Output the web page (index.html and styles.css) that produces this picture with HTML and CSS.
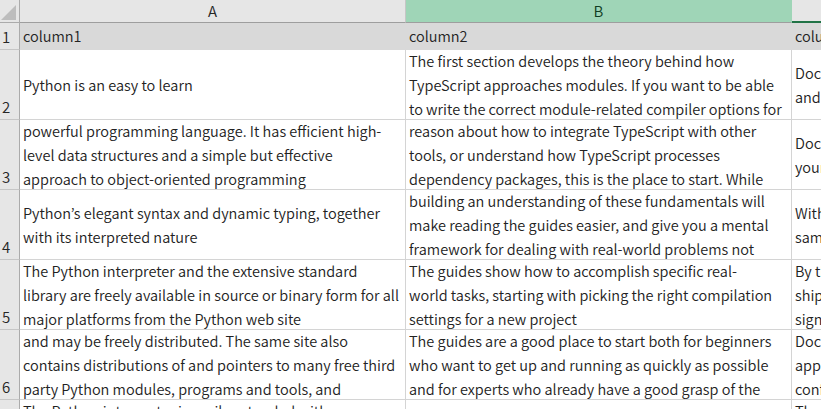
FILE: index.html
```html
<!DOCTYPE html>
<html lang="en">
<head>
<meta charset="utf-8">
<title>Sheet</title>
<link rel="stylesheet" href="styles.css">
</head>
<body>
<div class="sheet">
  <div class="corner"><svg class="tri" width="19" height="22" viewBox="0 0 19 22"><polygon points="1,20 16,5 16,20" fill="#bdbdbd"/></svg></div>
  <div class="colhead">A</div>
  <div class="colhead sel">B</div>
  <div class="colhead next">C</div>

  <div class="rowhead">1</div>
  <div class="cell title"><span>column1</span></div>
  <div class="cell title"><span>column2</span></div>
  <div class="cell title"><span>column3</span></div>

  <div class="rowhead">2</div>
  <div class="cell"><span>Python is an easy to learn</span></div>
  <div class="cell"><span>The first section develops the theory behind how</span><span>TypeScript approaches modules. If you want to be able</span><span>to write the correct module-related compiler options for</span></div>
  <div class="cell"><span>Documentation on how modules are resolved</span><span>and emitted by the compiler</span></div>

  <div class="rowhead">3</div>
  <div class="cell"><span>powerful programming language. It has efficient high-</span><span>level data structures and a simple but effective</span><span>approach to object-oriented programming</span></div>
  <div class="cell"><span>reason about how to integrate TypeScript with other</span><span>tools, or understand how TypeScript processes</span><span>dependency packages, this is the place to start. While</span></div>
  <div class="cell"><span>Docs on choosing compiler options for</span><span>your project</span></div>

  <div class="rowhead">4</div>
  <div class="cell"><span>Python’s elegant syntax and dynamic typing, together</span><span>with its interpreted nature</span></div>
  <div class="cell"><span>building an understanding of these fundamentals will</span><span>make reading the guides easier, and give you a mental</span><span>framework for dealing with real-world problems not</span></div>
  <div class="cell"><span>Without changing the output, the</span><span>same settings apply</span></div>

  <div class="rowhead">5</div>
  <div class="cell"><span>The Python interpreter and the extensive standard</span><span>library are freely available in source or binary form for all</span><span>major platforms from the Python web site</span></div>
  <div class="cell"><span>The guides show how to accomplish specific real-</span><span>world tasks, starting with picking the right compilation</span><span>settings for a new project</span></div>
  <div class="cell"><span>By the end, you will be comfortable</span><span>shipping libraries with accurate type</span><span>signatures</span></div>

  <div class="rowhead">6</div>
  <div class="cell"><span>and may be freely distributed. The same site also</span><span>contains distributions of and pointers to many free third</span><span>party Python modules, programs and tools, and</span></div>
  <div class="cell"><span>The guides are a good place to start both for beginners</span><span>who want to get up and running as quickly as possible</span><span>and for experts who already have a good grasp of the</span></div>
  <div class="cell"><span>Documentation for</span><span>applications and their</span><span>configuration files</span></div>

  <div class="rowhead">7</div>
  <div class="cell"><span>The Python interpreter is easily extended with new</span><span>functions and data types implemented in C or C++</span><span>(or other languages callable from C)</span></div>
  <div class="cell"></div>
  <div class="cell"><span>The reference section covers</span><span>each option in detail</span><span>with examples</span></div>
</div>
</body>
</html>
```

FILE: styles.css
```css
html, body {
  margin: 0;
  padding: 0;
  overflow: hidden;
  background: #ffffff;
}
body {
  width: 821px;
  height: 409px;
  font-family: "Noto Sans CJK JP", "Noto Sans", sans-serif;
  font-size: 14.5px;
  font-weight: 350;
  color: #222222;
}
.sheet {
  display: grid;
  grid-template-columns: 20px 386px 386px 386px;
  grid-template-rows: 23px 27px 70px 70px 70px 70px 70px 70px;
  width: 1178px;
}
.sheet > div {
  box-sizing: border-box;
  overflow: hidden;
}
.corner {
  background: #e6e6e6;
  border-right: 1px solid #ababab;
  border-bottom: 1px solid #ababab;
}
.tri {
  display: block;
}
.colhead {
  background: #e6e6e6;
  border-right: 1px solid #c6c6c6;
  border-bottom: 1px solid #9e9e9e;
  display: flex;
  align-items: center;
  justify-content: center;
  line-height: 22px;
  font-size: 15px;
  color: #262626;
}
.colhead.sel {
  background: #9fd5b7;
  border-right-color: #9fd5b7;
  color: #0f3d22;
}
.colhead.next {
  border-bottom: 2px solid #217346;
}
.rowhead {
  background: #e6e6e6;
  border-right: 1px solid #ababab;
  border-bottom: 1px solid #c6c6c6;
  display: flex;
  align-items: flex-end;
  padding: 0 0 2px 2px;
  line-height: 20px;
  font-size: 15px;
  color: #262626;
}
.cell {
  border-right: 1px solid #d4d4d4;
  border-bottom: 1px solid #d4d4d4;
  display: flex;
  flex-direction: column;
  justify-content: center;
  padding: 0 2px 0 3px;
  line-height: 24px;
}
.cell span {
  display: block;
  white-space: nowrap;
}
.cell.title {
  background: #d9d9d9;
  border-right-color: #d9d9d9;
  border-bottom-color: #d9d9d9;
  line-height: 26px;
}
```
